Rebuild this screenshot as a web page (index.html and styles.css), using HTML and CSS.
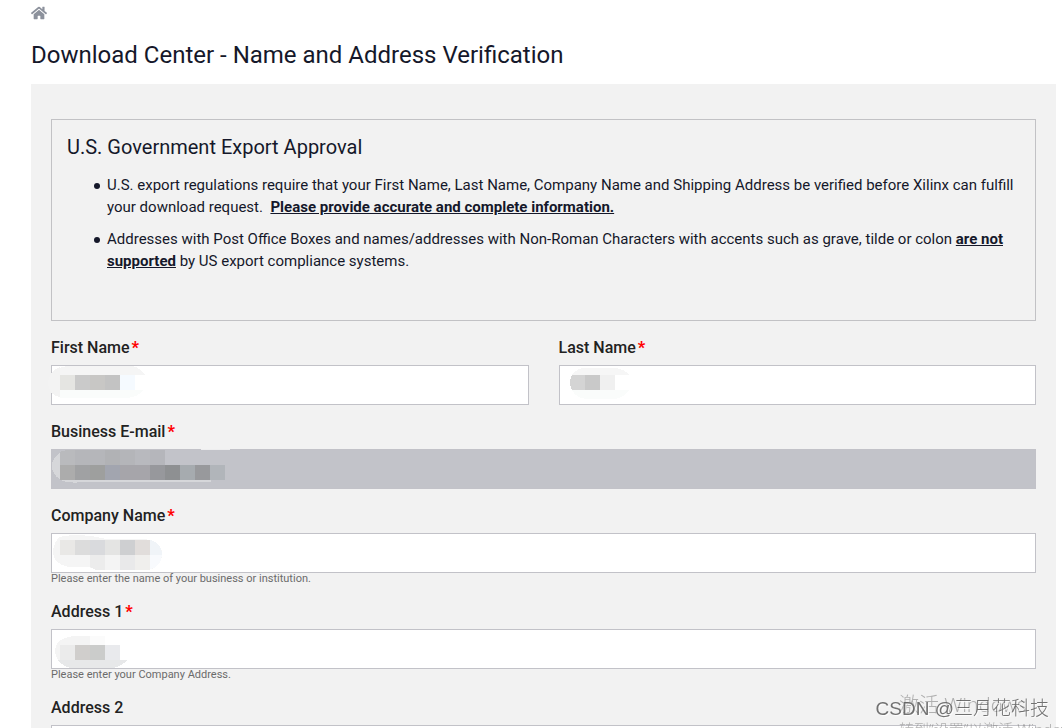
FILE: index.html
```html
<!DOCTYPE html>
<html lang="en">
<head>
  <meta charset="UTF-8" />
  <meta name="viewport" content="width=device-width, initial-scale=1.0"/>
  <title>Download Center - Name and Address Verification</title>
  <link rel="stylesheet" href="styles.css">
</head>
<body>
  <main class="page">
    <nav class="breadcrumb">
      <a href="#" aria-label="Home">
        <svg class="home-icon" viewBox="0 0 576 512"><path fill="currentColor" d="M280.37 148.26L96 300.11V464a16 16 0 0 0 16 16l112.06-.29a16 16 0 0 0 15.92-16V368a16 16 0 0 1 16-16h64a16 16 0 0 1 16 16v95.64a16 16 0 0 0 16 16.05L464 480a16 16 0 0 0 16-16V300L295.67 148.26a12.19 12.19 0 0 0-15.3 0zM571.6 251.47L488 182.56V44.05a12 12 0 0 0-12-12h-56a12 12 0 0 0-12 12v72.61L318.47 43a48 48 0 0 0-61 0L4.34 251.47a12 12 0 0 0-1.6 16.9l25.5 31A12 12 0 0 0 45.15 301l235.22-193.74a12.19 12.19 0 0 1 15.3 0L530.9 301a12 12 0 0 0 16.9-1.6l25.5-31a12 12 0 0 0-1.7-16.93z"/></svg>
      </a>
    </nav>
    <h1>Download Center - Name and Address Verification</h1>

    <form class="panel">
      <section class="notice">
        <h2>U.S. Government Export Approval</h2>
        <ul>
          <li>U.S. export regulations require that your First Name, Last Name, Company Name and Shipping Address be verified before Xilinx can fulfill your download request.&nbsp; <strong>Please provide accurate and complete information.</strong></li>
          <li>Addresses with Post Office Boxes and names/addresses with Non-Roman Characters with accents such as grave, tilde or colon <strong>are not supported</strong> by US export compliance systems.</li>
        </ul>
      </section>

      <div class="row">
        <div class="field">
          <label for="firstName">First Name<span class="required">*</span></label>
          <div class="control">
            <input type="text" id="firstName" />
            <svg class="mask" viewBox="0 0 190 40" shape-rendering="crispEdges">
              <path fill="#f5f5f5" d="M9 3Q13 1 20 1H81Q90 3 94 10H9z"/>
              <path fill="#f3f3f3" d="M9 2Q3 4 0 9Q-6 17 0 27Q3 31 9 32z"/>
              <path fill="#fafcfb" d="M9 25H93Q87 32 76 33H9z"/>
              <path fill="#e5e5e2" d="M9 10h15v15H9z"/>
              <path fill="#cacaca" d="M24 10h15v15H24z"/>
              <path fill="#c8c7c5" d="M39 10h15v15H39z"/>
              <path fill="#c3c3c3" d="M54 10h15v15H54z"/>
              <path fill="#f5faff" d="M69 10h15v15H69z"/>
            </svg>
          </div>
        </div>
        <div class="field">
          <label for="lastName">Last Name<span class="required">*</span></label>
          <div class="control">
            <input type="text" id="lastName" />
            <svg class="mask" viewBox="0 0 190 40" shape-rendering="crispEdges">
              <path fill="#f6f6f6" d="M13 10Q18 3 26 3H57Q65 4 70 10z"/>
              <path fill="#fafcfb" d="M13 25H70Q65 33 55 34H27Q17 33 13 25z"/>
              <path fill="#d4d4d4" d="M13 10h13v15H13Q9 18 13 10z"/>
              <path fill="#c9c9c9" d="M26 10h15v15H26z"/>
              <path fill="#f0f0f0" d="M41 10h15v15H41z"/>
            </svg>
          </div>
        </div>
      </div>

      <div class="field">
        <label for="email">Business E-mail<span class="required">*</span></label>
        <div class="control">
          <input type="email" id="email" disabled />
          <svg class="mask" viewBox="0 0 190 40" shape-rendering="crispEdges">
            <path fill="#d6d7da" d="M9 3Q-7 17 9 31Q20 35 30 33H160V31H9z"/>
            <path fill="#eeeeef" d="M150 0h29v1h-29z"/>
            <path fill="#b9babd" d="M9 3Q13 1 20 1H24V16H9z"/>
            <path fill="#b5b6ba" d="M24 1h30v15H24z"/>
            <path fill="#b1b2b5" d="M54 1h15v15H54z"/>
            <path fill="#b4b5b9" d="M69 1h15v15H69z"/>
            <path fill="#b8b9be" d="M84 1h15v15H84z"/>
            <path fill="#b5b6bb" d="M99 1h15v15H99z"/>
            <path fill="#acacac" d="M9 16h15v15H9z"/>
            <path fill="#a0a1a3" d="M24 16h15v15H24z"/>
            <path fill="#9e9f9e" d="M39 16h15v15H39z"/>
            <path fill="#a2a5af" d="M54 16h15v15H54z"/>
            <path fill="#a6a5aa" d="M69 16h30v15H69z"/>
            <path fill="#97989c" d="M99 16h15v15H99z"/>
            <path fill="#8e9092" d="M114 16h15v15H114z"/>
            <path fill="#a6abaf" d="M129 16h15v15H129z"/>
            <path fill="#98999c" d="M144 16h15v15H144z"/>
            <path fill="#b1b5ba" d="M159 16h15v15H159z"/>
          </svg>
        </div>
      </div>

      <div class="field">
        <label for="company">Company Name<span class="required">*</span></label>
        <div class="control">
          <input type="text" id="company" aria-describedby="companyHelp" />
          <svg class="mask" viewBox="0 0 190 40" shape-rendering="crispEdges">
            <path fill="#f5f5f5" d="M9 4Q20 1 40 3L55 6H93Q108 8 111 18Q112 33 98 37H46L38 34H18Q2 31 2 18Q3 8 9 4z"/>
            <path fill="#f0f4f8" d="M99 7Q111 10 111 22H99z"/>
            <path fill="#f8fafd" d="M99 22H111Q110 34 99 36z"/>
            <path fill="#e9e8e6" d="M9 7h15v15H9z"/>
            <path fill="#dcdcdc" d="M24 7h15v15H24z"/>
            <path fill="#d9dadd" d="M39 7h15v15H39z"/>
            <path fill="#e4e4e3" d="M54 7h15v15H54z"/>
            <path fill="#cecfd1" d="M69 7h15v15H69z"/>
            <path fill="#e1dddb" d="M84 7h15v15H84z"/>
            <path fill="#ececec" d="M39 22h15v15H45L39 34z"/>
            <path fill="#f4f4f4" d="M54 22h15v15H54z"/>
            <path fill="#e9e9ea" d="M69 22h15v15H69z"/>
            <path fill="#f0efed" d="M84 22h15v15H84z"/>
          </svg>
        </div>
        <small id="companyHelp">Please enter the name of your business or institution.</small>
      </div>

      <div class="field">
        <label for="address1">Address 1<span class="required">*</span></label>
        <div class="control">
          <input type="text" id="address1" aria-describedby="address1Help" />
          <svg class="mask" viewBox="0 0 190 40" shape-rendering="crispEdges">
            <path fill="#f4f4f4" d="M39 7H23Q4 9 4 23Q5 30 9 33H39z"/>
            <path fill="#fbfbfb" d="M39 7h15v9H39z"/>
            <path fill="#ebebeb" d="M9 16h15v15H9z"/>
            <path fill="#d0cecc" d="M24 16h15v15H24z"/>
            <path fill="#cbcccb" d="M39 16h15v15H39z"/>
            <path fill="#e9eaed" d="M54 16h15v15H54z"/>
            <path fill="#e7e8e9" d="M7 31H76Q70 38 62 39H20Q11 37 7 31z"/>
          </svg>
        </div>
        <small id="address1Help">Please enter your Company Address.</small>
      </div>

      <div class="field">
        <label for="address2">Address 2</label>
        <div class="control">
          <input type="text" id="address2" />
        </div>
      </div>
    </form>
  </main>

  <div class="activate">
    <p class="activate-title">激活 Windows</p>
    <p class="activate-text">转到“设置”以激活 Windows</p>
  </div>
  <div class="watermark">CSDN @三月花科技</div>
</body>
</html>
```
FILE: styles.css
```css
* {
  box-sizing: border-box;
}
body {
  margin: 0;
  height: 100vh;
  overflow: hidden;
  background: #ffffff;
  color: #15182a;
  font-family: Roboto, "Noto Sans CJK SC", sans-serif;
  font-size: 15px;
  line-height: 22px;
}
.page {
  padding: 4px 8px 0 31px;
}
.breadcrumb {
  height: 32px;
}
.breadcrumb a {
  color: #8c919c;
}
.home-icon {
  display: block;
  width: 16px;
  height: 18px;
}
h1 {
  margin: 0 0 10px;
  font-size: 24px;
  font-weight: 400;
  line-height: 38px;
}
.panel {
  padding: 35px 20px;
  background: #f2f2f2;
}
.notice {
  padding: 13px 15px 48px;
  margin-bottom: 15px;
  border: 1px solid #c2c2c5;
}
.notice h2 {
  margin: 0 0 13px;
  font-size: 20px;
  font-weight: 400;
  line-height: 28px;
}
.notice ul {
  margin: 0;
  padding-left: 40px;
  list-style: none;
}
.notice li::before {
  content: "";
  display: inline-block;
  width: 6px;
  height: 6px;
  margin-left: -13px;
  margin-right: 7px;
  border-radius: 50%;
  background: #15182a;
  vertical-align: middle;
}
.notice li + li {
  margin-top: 10px;
}
.notice strong {
  font-weight: 700;
  text-decoration: underline;
}
.row {
  display: grid;
  grid-template-columns: 1fr 1fr;
  column-gap: 30px;
}
.field {
  margin-bottom: 15px;
}
.field label {
  display: block;
  margin-bottom: 5px;
  color: #222222;
  font-size: 16px;
  font-weight: 500;
  line-height: 24px;
}
.required {
  margin-left: 2px;
  color: #ff0000;
  font-weight: 900;
}
.control {
  position: relative;
}
.control input {
  display: block;
  width: 100%;
  height: 40px;
  padding: 0 10px;
  border: 1px solid #c2c2c8;
  border-radius: 0;
  background: #ffffff;
  font: inherit;
}
.control input:disabled {
  background: #c2c3c9;
}
/* pixelated cover over the private values */
.mask {
  position: absolute;
  top: 0;
  left: 0;
  width: 190px;
  height: 40px;
  overflow: visible;
  pointer-events: none;
}
.field small {
  display: block;
  color: #6b6b6b;
  font-size: 11px;
  line-height: 12px;
}
.activate {
  position: fixed;
  left: 899px;
  top: 691px;
  color: rgba(130, 130, 130, 0.6);
  font-family: "Noto Sans", "Noto Sans CJK SC", sans-serif;
  font-weight: 300;
  white-space: nowrap;
}
.activate p {
  margin: 0;
}
.activate-title {
  font-size: 20px;
  line-height: 28px;
}
.activate-text {
  font-size: 15px;
  line-height: 20px;
}
.watermark {
  position: fixed;
  right: 15px;
  bottom: 5px;
  color: rgba(80, 80, 80, 0.8);
  font-family: "Liberation Sans", "Noto Sans CJK SC", sans-serif;
  font-size: 19px;
  font-weight: 300;
  line-height: 28px;
  text-shadow: 1px 1px 1px #ffffff;
}
```
